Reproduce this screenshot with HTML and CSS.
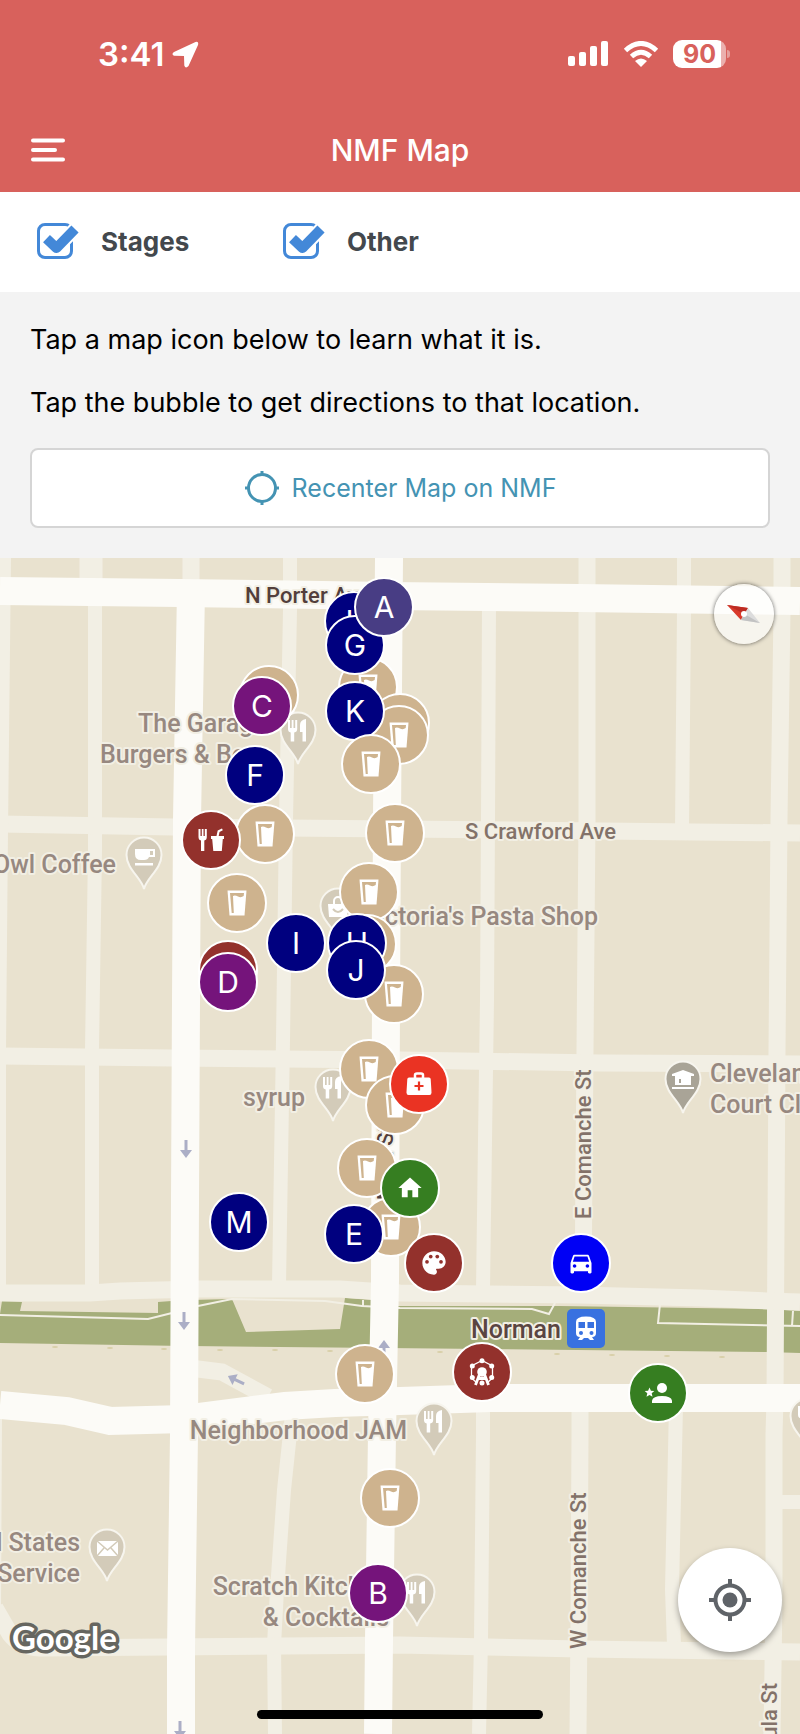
FILE: index.html
```
<!DOCTYPE html>
<html lang="en">
	<head>
		<meta charset="utf-8" />
		<meta name="viewport" content="width=device-width, initial-scale=1" />
		<title>NMF Map</title>
		<link rel="stylesheet" href="styles.css">
	</head>
	<body>
		<header class="header">
			<div class="status">
				<div class="clock">
					<span>3:41</span>
					<svg width="27" height="27" viewBox="0 0 27 27"><path d="M23.500 1L2 11Q-1 13 2 14.700L12 15L12.300 24.500Q13.500 28 16.500 25L26 4Q27 0 23.500 1z" fill="#fff"/></svg>
				</div>
				<div class="indicators">
					<svg width="41" height="26" viewBox="0 0 41 26" fill="#fff">
						<rect x="0" y="15" width="7" height="10" rx="2"/>
						<rect x="11" y="11" width="7" height="14" rx="2"/>
						<rect x="22" y="5" width="7" height="20" rx="2"/>
						<rect x="33" y="0" width="7" height="25" rx="2"/>
					</svg>
					<svg width="36" height="26" viewBox="0 0 36 26" fill="none" stroke="#fff" stroke-width="5">
						<path d="M2.500 9.500Q18-4.500 33.500 9.500"/>
						<path d="M8.500 15.500Q18 7 27.500 15.500"/>
						<path d="M12 20Q18 15 24 20L18 26z" fill="#fff" stroke="none"/>
					</svg>
					<div class="battery"><span class="battery-level">90</span></div>
				</div>
			</div>
			<div class="titlebar">
				<button class="menu" aria-label="Menu">
					<svg width="34" height="24" viewBox="0 0 34 24" stroke="#fff" stroke-width="4" stroke-linecap="round"><path d="M2 2.500h30M2 12h22M2 21.500h30"/></svg>
				</button>
				<h1>NMF Map</h1>
			</div>
		</header>

		<div class="filters">
			<label class="filter">
				<span class="box">
					<input type="checkbox" checked />
					<svg viewBox="0 0 44 36" width="44" height="36"><path class="tick-edge" d="M9.500 15.500l10 9.500L38 6"/><path class="tick" d="M9.500 15.500l10 9.500L38 6"/></svg>
				</span>
				Stages
			</label>
			<label class="filter">
				<span class="box">
					<input type="checkbox" checked />
					<svg viewBox="0 0 44 36" width="44" height="36"><path class="tick-edge" d="M9.500 15.500l10 9.500L38 6"/><path class="tick" d="M9.500 15.500l10 9.500L38 6"/></svg>
				</span>
				Other
			</label>
		</div>

		<section class="help">
			<p>Tap a map icon below to learn what it is.</p>
			<p>Tap the bubble to get directions to that location.</p>
			<button class="recenter">
				<svg width="36" height="36" viewBox="0 0 36 36" fill="none" stroke="#4493b3" stroke-width="3"><circle cx="18" cy="18" r="13.500"/><path d="M18 1v5M18 30v5M1 18h5M30 18h5"/></svg>
				Recenter Map on NMF
			</button>
		</section>

		<main class="map" id="map">
			<svg class="tiles" viewBox="0 558 800 1176">
				<defs>
					<path id="drop" d="M0 34C-2.500 23-17.500 14-17.500 0A17.500 17.500 0 0 1 17.500 0C17.500 14 2.500 23 0 34z" stroke="#f7f5ee" stroke-width="2"/>
					<g id="cutlery" fill="#fff">
						<path d="M-10-10h2v8h1.700v-8h1.800v8h1.700v-8h2v9q0 3-3 3.500v9h-3.500v-9q-2.700-.5-2.700-3.500z"/>
						<path d="M2-5q0-5 6-6v22.500H4.500V2H2z"/>
					</g>
					<path id="arrow" d="M-1.500-9h3V1H6L0 9-6 1h4.500z" fill="#abaec6"/>
				</defs>

				<rect y="558" width="800" height="1176" fill="#e9e2cf"/>

				<!-- rail corridor -->
				<g fill="#a5ae7a">
					<path d="M2 1301L22 1302 20 1311 158 1313 158 1302 185 1300V1346L0 1343V1314z"/>
					<path d="M190 1300L232 1299 246 1332 340 1329 345 1298 385 1301V1348L190 1346z"/>
					<path d="M385 1306L560 1306 767 1309 800 1311V1353L767 1352 385 1348z"/>
				</g>
				<g class="path-line">
					<path d="M0 1315L148 1319 172 1313M198 1306L232 1299 325 1301 362 1306 400 1308 532 1309 549 1314 555 1303"/>
					<path d="M363 1300v6M660 1304L658 1323 800 1326M793 1311L792 1326"/>
				</g>
				<g fill="#d8cfa8">
					<ellipse cx="55" cy="1347" rx="3" ry="1"/><ellipse cx="110" cy="1348" rx="3" ry="1"/><ellipse cx="164" cy="1349" rx="3" ry="1"/>
					<ellipse cx="220" cy="1350" rx="3" ry="1"/><ellipse cx="275" cy="1350" rx="3" ry="1"/><ellipse cx="330" cy="1351" rx="3" ry="1"/>
					<ellipse cx="440" cy="1352" rx="3" ry="1"/><ellipse cx="557" cy="1354" rx="3" ry="1"/><ellipse cx="612" cy="1355" rx="3" ry="1"/>
					<ellipse cx="667" cy="1356" rx="3" ry="1"/><ellipse cx="722" cy="1357" rx="3" ry="1"/>
				</g>

				<!-- side streets -->
				<g class="minor w14">
					<path d="M95 600L95 850 92 1050 92 1290"/>
					<path d="M290 558L290 610 286 820 283 1040 279 1285"/>
					<path d="M293 1405L284 1490 277 1590 274 1645 275 1734"/>
					<path d="M489 605L488 820 487 1000 485 1140 483 1290"/>
					<path d="M483 1405L483 1434 481 1640 479 1734"/>
					<path d="M684 558L684 610 682 830"/>
					<path d="M676 1405L672 1590 674 1645"/>
					<path d="M775 1502H800"/>
				</g>
				<g class="minor w17">
					<path d="M91 558V582" stroke-width="23"/>
					<path d="M191 558V582"/>
					<path d="M587 558L587 820 585 1050 583 1295"/>
					<path d="M580 1405L580 1434 579 1620 578 1734"/>
					<path d="M782 558L782 610 779 820 777 1050 775 1400 774 1434 774 1600 772 1734"/>
					<path d="M0 824L173 827 400 829 800 833"/>
					<path d="M0 1056L172 1058 400 1060 600 1063 800 1064"/>
					<path d="M0 1293L90 1293 120 1291 200 1289 340 1289 400 1293 580 1295 700 1298 767 1301 800 1302"/>
					<path d="M190 1368L222 1372 268 1397"/>
					<path d="M-5 1608L10 1634Q20 1647 40 1648L168 1647 400 1645 580 1649 800 1652"/>
				</g>
				<path class="minor-fill" d="M0 558H11L8 830 6 1050V1290H0zM0 1415H2L1 1610H0z"/>

				<!-- main streets -->
				<g class="major">
					<path d="M0 591L180 593 390 596 578 598 800 601"/>
					<path d="M0 1405L67 1411 110 1421 184 1419 285 1406 335 1403 400 1401 490 1398 800 1398"/>
					<path d="M191 590L187 820 186 1000 185 1200 184 1434 181 1650 181 1734"/>
					<path d="M389 558L387 820 386 1000 385 1280 382 1434 379 1640 378 1734"/>
				</g>

				<use href="#arrow" x="186" y="1149"/>
				<use href="#arrow" x="184" y="1321"/>
				<use href="#arrow" x="180" y="1730"/>
				<use href="#arrow" transform="translate(384 1349) rotate(180)"/>
				<use href="#arrow" transform="translate(236 1380) rotate(116)"/>

				<!-- places -->
				<g fill="#d3cbb9">
					<g transform="translate(298 730)"><use href="#drop"/><use href="#cutlery"/></g>
					<g transform="translate(333 1087)"><use href="#drop"/><use href="#cutlery"/></g>
					<g transform="translate(434 1421)"><use href="#drop"/><use href="#cutlery"/></g>
					<g transform="translate(417 1592)"><use href="#drop"/><use href="#cutlery"/></g>
					<g transform="translate(808 1416)"><use href="#drop"/><use href="#cutlery"/></g>
					<g transform="translate(144 855)">
						<use href="#drop"/>
						<path d="M-9-6H11V2H5Q4 5 0 5H-3Q-9 5-9-1zM6-4V0H9V-4zM-9 8H9V10.500H-9z" fill="#fff" fill-rule="evenodd"/>
					</g>
					<g transform="translate(338 906)">
						<use href="#drop"/>
						<path d="M-10-2H10L9 11H-9z" fill="#fff"/>
						<path d="M-4-2V-5A4 4 0 0 1 4-5V-2" fill="none" stroke="#fff" stroke-width="2"/>
						<path d="M-5 3Q0 9 5 3" fill="none" stroke="#d3cbb9" stroke-width="2"/>
					</g>
					<g transform="translate(107 1547)">
						<use href="#drop"/>
						<rect x="-10" y="-6" width="21" height="15" fill="#fff"/>
						<path d="M-10-6L.5 3 11-6M-10 9L-3 1M11 9L4 1" fill="none" stroke="#d3cbb9" stroke-width="1.500"/>
					</g>
				</g>
				<g transform="translate(683 1079)" fill="#a9a497">
					<use href="#drop"/>
					<path d="M-11-3V-5L0-9 11-5V-3H8V6H-8V-3zM-4-2V4H-2V0H-4M4-2V4H2V0H4M-11 8H11V10H-11z" fill="#fff"/>
				</g>

				<g class="poi">
					<text x="138" y="732">The Garage</text>
					<text x="100" y="763">Burgers &amp; Beer</text>
					<text x="116" y="873" text-anchor="end">Owl Coffee</text>
					<text x="598" y="925" text-anchor="end">Victoria's Pasta Shop</text>
					<text x="305" y="1106" text-anchor="end">syrup</text>
					<text x="710" y="1082">Clevelan</text>
					<text x="710" y="1113">Court Cl</text>
					<text x="407" y="1439" text-anchor="end">Neighborhood JAM</text>
					<text x="80" y="1551" text-anchor="end">d States</text>
					<text x="80" y="1582" text-anchor="end">Service</text>
					<text x="389" y="1595" text-anchor="end">Scratch Kitchen</text>
					<text x="389" y="1626" text-anchor="end">&amp; Cocktails</text>
				</g>
				<g class="street">
					<text x="465" y="839">S Crawford Ave</text>
					<text transform="translate(591 1219) rotate(-90)">E Comanche St</text>
					<text transform="translate(586 1649) rotate(-90)">W Comanche St</text>
					<text transform="translate(777 1683) rotate(-90)" text-anchor="end">Eufaula St</text>
					<text class="dark" x="245" y="603">N Porter Ave</text>
					<text class="dark" transform="translate(393 1218) rotate(-90)">E Main St</text>
				</g>
				<text class="station" x="471" y="1338">Norman</text>
				<g transform="translate(567 1309)">
					<rect width="38" height="39" rx="5" fill="#3871e0"/>
					<path d="M9 13Q9 7.500 19 7.500T29 13V24Q29 28 25 28L27 31H23L21 29H17L15 31H11L13 28Q9 28 9 24z" fill="#fff"/>
					<path d="M11.500 13h6.500v6h-6.500zM20.500 13h6.500v6h-6.500z" fill="#3871e0"/>
					<circle cx="14" cy="24" r="2" fill="#3871e0"/><circle cx="24.500" cy="24" r="2" fill="#3871e0"/>
				</g>
				<text class="google" x="12" y="1650">Google</text>
			</svg>

			<button class="compass" aria-label="Compass">
				<svg width="60" height="60" viewBox="0 0 60 60">
					<path d="M13 21L34 24 27 36z" fill="#d93a2b"/>
					<path d="M13 21L34 24 30.500 30z" fill="#bd2c22"/>
					<path d="M34 24L46 39 27 36z" fill="#dcdcdc"/>
					<path d="M30.500 30L46 39 27 36z" fill="#c2c2c2"/>
					<circle cx="30" cy="30" r="3" fill="#fff"/>
				</svg>
			</button>
			<button class="locate" aria-label="My location">
				<svg width="42" height="42" viewBox="0 0 42 42" fill="none" stroke="#5f6368" stroke-width="4"><circle cx="21" cy="21" r="14.500"/><circle cx="21" cy="21" r="7.500" fill="#5f6368" stroke="none"/><path d="M21 0v6M21 36v6M0 21h6M36 21h6"/></svg>
			</button>
			<div class="home-bar"></div>
		</main>

		<!-- marker icons -->
		<svg class="sprite">
			<symbol id="drink" viewBox="0 0 28 28">
				<path d="M4.500 1.500H23.500L21.500 26.500H6.500z" fill="#fff"/>
				<path d="M7 4H21L20.700 7Q18 9 15 7.500T10 7L10.800 24H8.700z" fill="#ceb38e"/>
			</symbol>
			<symbol id="food" viewBox="0 0 28 28">
				<path d="M1.500 3h2v7h1.300V3h1.700v7h1.300V3h2v8q0 3-2.500 3.500V25H4V14.500Q1.500 14 1.500 11z" fill="#fff"/>
				<path d="M14 10h5.500l1.200-5.500L25 2.500l.8 1.800-3.300 1.600-.8 4.100H27v3h-1.200L24.800 25h-8.500L15.200 13H14z" fill="#fff"/>
			</symbol>
			<symbol id="medical" viewBox="0 0 28 28">
				<path d="M10 8V5Q10 3.500 12 3.500H16Q18 3.500 18 5V8" fill="none" stroke="#fff" stroke-width="2.500"/>
				<path d="M4 7.500H24Q25.500 7.500 25.700 9L26.500 22.500Q26.500 25 24.500 25H3.500Q1.500 25 1.500 22.500L2.300 9Q2.500 7.500 4 7.500z" fill="#fff"/>
				<path d="M14 11.500v9M9.500 16h9" stroke="#ea3323" stroke-width="2.200"/>
			</symbol>
			<symbol id="home" viewBox="0 0 24 24"><path d="M10 20v-6h4v6h5v-8h3L12 3 2 12h3v8z" fill="#fff"/></symbol>
			<symbol id="art" viewBox="0 0 24 24">
				<path d="M12 2C6.490 2 2 6.490 2 12s4.490 10 10 10c1.380 0 2.500-1.120 2.500-2.500 0-.61-.23-1.200-.64-1.670-.08-.1-.13-.21-.13-.33 0-.28.22-.5.5-.5H16c3.310 0 6-2.690 6-6 0-4.960-4.490-9-10-9z" fill="#fff"/>
				<g fill="#93312c"><circle cx="6" cy="11" r="1.600"/><circle cx="9.200" cy="6.500" r="1.600"/><circle cx="14.800" cy="6.500" r="1.600"/><circle cx="18" cy="11" r="1.600"/></g>
			</symbol>
			<symbol id="car" viewBox="0 0 24 24"><path d="M18.920 6.010C18.720 5.420 18.160 5 17.500 5h-11c-.66 0-1.210.42-1.420 1.010L3 12v8c0 .55.45 1 1 1h1c.55 0 1-.45 1-1v-1h12v1c0 .55.45 1 1 1h1c.55 0 1-.45 1-1v-8l-2.080-5.990zM6.500 16c-.83 0-1.500-.67-1.500-1.500S5.670 13 6.500 13s1.500.67 1.500 1.500S7.330 16 6.500 16zm11 0c-.83 0-1.500-.67-1.500-1.500s.67-1.500 1.500-1.500 1.500.67 1.500 1.500-.67 1.500-1.500 1.500zM5 11l1.500-4.500h11L19 11H5z" fill="#fff"/></symbol>
			<symbol id="ride" viewBox="0 0 28 28">
				<path d="M14 2.500L24.500 8V20L19 25M9 25L3.500 20V8L14 2.500" fill="none" stroke="#fff" stroke-width="1.300"/>
				<g fill="#fff"><circle cx="14" cy="2.800" r="2.500"/><circle cx="23.700" cy="8" r="2.500"/><circle cx="23.700" cy="19.500" r="2.500"/><circle cx="4.300" cy="8" r="2.500"/><circle cx="4.300" cy="19.500" r="2.500"/><circle cx="14" cy="25" r="2.500"/><circle cx="14" cy="14" r="4.800"/></g>
				<path d="M12 15L7.500 27M16 15L20.500 27M10 20.500h8" stroke="#fff" stroke-width="2.800"/>
			</symbol>
			<symbol id="guest" viewBox="0 0 28 28">
				<circle cx="18" cy="9" r="5" fill="#fff"/>
				<path d="M8 24V21.500Q9 17 18 17T28 21.500V24z" fill="#fff"/>
				<path d="M5.500 8.500L6.900 11.700 10.300 12 7.700 14.300 8.500 17.700 5.500 15.900 2.500 17.700 3.300 14.300.7 12 4.100 11.700z" fill="#fff"/>
			</symbol>
		</svg>
		<script src="script.js"></script>
	</body>
</html>
```

FILE: styles.css
```
* {
	box-sizing: border-box;
}
body {
	margin: 0;
	font-family: Inter, "Liberation Sans", sans-serif;
	background: #f3f3f3;
	color: #000;
}
button {
	padding: 0;
	border: none;
	font-family: inherit;
	cursor: pointer;
}
svg {
	display: block;
}

/* header */
.header {
	height: 192px;
	background: #d8615c;
	color: #fff;
}
.status {
	display: flex;
	justify-content: space-between;
	align-items: center;
	height: 108px;
	padding: 0 67px 0 98px;
}
.clock {
	display: flex;
	align-items: center;
	gap: 8px;
	font-size: 33px;
	font-weight: 600;
}
.indicators {
	display: flex;
	align-items: center;
	gap: 14px;
}
.battery {
	position: relative;
	width: 53px;
	height: 28px;
	border-radius: 9px;
	background: linear-gradient(to right, #fff 48px, #ebb0ae 48px);
	margin-right: 7px;
	text-align: center;
}
.battery::after {
	content: "";
	position: absolute;
	left: 54px;
	top: 10px;
	width: 3px;
	height: 8px;
	border-radius: 0 3px 3px 0;
	background: #e59f9c;
}
.battery-level {
	color: #d8615c;
	font-size: 25px;
	line-height: 28px;
	font-weight: 700;
}
.titlebar {
	display: grid;
	grid-template-columns: 34px 1fr 34px;
	align-items: center;
	height: 84px;
	padding: 0 31px;
}
.menu {
	background: none;
}
h1 {
	margin: 0;
	text-align: center;
	font-size: 30px;
	line-height: 84px;
	font-weight: 500;
}

/* filters */
.filters {
	display: flex;
	align-items: center;
	height: 100px;
	padding: 0 0 2px 37px;
	background: #fff;
}
.filter {
	display: flex;
	align-items: center;
	gap: 20px;
	width: 246px;
	font-size: 26px;
	font-weight: 700;
	color: #43484d;
}
.box {
	display: grid;
	width: 44px;
	height: 36px;
}
.box input,
.box svg {
	grid-area: 1 / 1;
}
.box input {
	-webkit-appearance: none;
	appearance: none;
	width: 36px;
	height: 36px;
	margin: 0;
	border: 3px solid #4388d8;
	border-radius: 8px;
}
.tick,
.tick-edge {
	fill: none;
	stroke: #4388d8;
	stroke-width: 10;
	stroke-linejoin: round;
}
.tick-edge {
	stroke: #fff;
	stroke-width: 14;
}
.box input:not(:checked) + svg {
	visibility: hidden;
}

/* help text */
.help {
	padding: 16px 30px 30px;
}
.help p {
	margin: 0;
	font-size: 27px;
	line-height: 63px;
}
.recenter {
	display: flex;
	justify-content: center;
	align-items: center;
	gap: 12px;
	width: 100%;
	height: 80px;
	margin-top: 14px;
	border: 2px solid #d5d5d5;
	border-radius: 8px;
	background: #fff;
	color: #4493b3;
	font-size: 25px;
}

/* map */
.map {
	position: relative;
	overflow: hidden;
}
.tiles {
	width: 100%;
	height: auto;
}
.path-line {
	fill: none;
	stroke: #f2efe4;
	stroke-width: 2;
}
.minor {
	fill: none;
	stroke: #f2efe4;
}
.w14 {
	stroke-width: 14;
}
.w17 {
	stroke-width: 17;
}
.minor-fill {
	fill: #f2efe4;
}
.major {
	fill: none;
	stroke: #fcfbf7;
	stroke-width: 28;
}
.tiles text {
	font-family: Roboto, "Liberation Sans", sans-serif;
	stroke: #f2efe4;
	stroke-width: 4;
	stroke-linejoin: round;
	paint-order: stroke;
}
.poi text {
	font-size: 25px;
	font-weight: 500;
	fill: #978880;
}
.street text {
	font-size: 22px;
	font-weight: 500;
	fill: #837269;
}
.tiles .street .dark {
	fill: #523e3b;
}
.tiles .station {
	font-size: 25px;
	font-weight: 500;
	fill: #5a4542;
}
.tiles .google {
	font-family: Lato, sans-serif;
	font-size: 33px;
	font-weight: 700;
	fill: #fff;
	stroke: #666660;
	stroke-width: 7;
}

.pin {
	position: absolute;
	display: grid;
	place-items: center;
	width: 60px;
	height: 60px;
	margin: -30px 0 0 -30px;
	border: 2px solid #fff;
	border-radius: 50%;
	color: #fff;
	font-size: 30px;
	line-height: 30px;
}
.pin.tan {
	background: #ceb38e;
}
.pin.navy {
	background: #00007f;
}
.pin.slate {
	background: #483d84;
}
.pin.purple {
	background: #75147b;
}
.pin.brown {
	background: #93312c;
}
.pin.red {
	background: #ea3323;
}
.pin.green {
	background: #367e21;
}
.pin.blue {
	background: #0000f5;
}

.compass,
.locate {
	position: absolute;
	display: grid;
	place-items: center;
	border-radius: 50%;
}
.compass {
	top: 26px;
	right: 26px;
	width: 60px;
	height: 60px;
	background: rgba(255, 255, 255, 0.65);
	box-shadow: 0 0 4px rgba(0, 0, 0, 0.6);
}
.locate {
	right: 18px;
	bottom: 82px;
	width: 104px;
	height: 104px;
	background: #fff;
	box-shadow: 0 3px 6px rgba(0, 0, 0, 0.35);
}
.home-bar {
	position: absolute;
	left: 50%;
	bottom: 15px;
	width: 286px;
	height: 9px;
	margin-left: -143px;
	border-radius: 5px;
	background: #000;
}
.sprite {
	display: none;
}
```

FILE: script.js
```
// x, y are in the units of the map drawing
var TOP = 558;
var WIDTH = 800;
var HEIGHT = 1176;

var pins = [
	{ x: 269, y: 695, color: "tan" },
	{ x: 262, y: 706, color: "purple", letter: "C" },
	{ x: 368, y: 687, color: "tan", icon: "drink" },
	{ x: 354, y: 621, color: "navy", letter: "L" },
	{ x: 355, y: 645, color: "navy", letter: "G" },
	{ x: 384, y: 607, color: "slate", letter: "A" },
	{ x: 400, y: 723, color: "tan" },
	{ x: 399, y: 735, color: "tan", icon: "drink" },
	{ x: 355, y: 711, color: "navy", letter: "K" },
	{ x: 371, y: 764, color: "tan", icon: "drink" },
	{ x: 255, y: 775, color: "navy", letter: "F" },
	{ x: 265, y: 834, color: "tan", icon: "drink" },
	{ x: 211, y: 840, color: "brown", icon: "food" },
	{ x: 395, y: 833, color: "tan", icon: "drink" },
	{ x: 237, y: 903, color: "tan", icon: "drink" },
	{ x: 369, y: 892, color: "tan", icon: "drink" },
	{ x: 367, y: 944, color: "tan" },
	{ x: 394, y: 994, color: "tan", icon: "drink" },
	{ x: 296, y: 943, color: "navy", letter: "I" },
	{ x: 357, y: 943, color: "navy", letter: "H" },
	{ x: 356, y: 970, color: "navy", letter: "J" },
	{ x: 228, y: 970, color: "brown" },
	{ x: 228, y: 982, color: "purple", letter: "D" },
	{ x: 369, y: 1069, color: "tan", icon: "drink" },
	{ x: 395, y: 1105, color: "tan", icon: "drink" },
	{ x: 419, y: 1084, color: "red", icon: "medical" },
	{ x: 367, y: 1168, color: "tan", icon: "drink" },
	{ x: 391, y: 1227, color: "tan", icon: "drink" },
	{ x: 410, y: 1188, color: "green", icon: "home" },
	{ x: 239, y: 1222, color: "navy", letter: "M" },
	{ x: 354, y: 1234, color: "navy", letter: "E" },
	{ x: 434, y: 1263, color: "brown", icon: "art" },
	{ x: 581, y: 1263, color: "blue", icon: "car" },
	{ x: 482, y: 1372, color: "brown", icon: "ride" },
	{ x: 658, y: 1393, color: "green", icon: "guest" },
	{ x: 365, y: 1374, color: "tan", icon: "drink" },
	{ x: 390, y: 1498, color: "tan", icon: "drink" },
	{ x: 378, y: 1593, color: "purple", letter: "B" }
];

var map = document.getElementById("map");
var compass = document.querySelector(".compass");

pins.forEach(function (pin) {
	var button = document.createElement("button");
	button.className = "pin " + pin.color;
	button.style.left = (pin.x / WIDTH) * 100 + "%";
	button.style.top = ((pin.y - TOP) / HEIGHT) * 100 + "%";
	if (pin.letter) {
		button.textContent = pin.letter;
	} else if (pin.icon) {
		button.innerHTML = '<svg width="28" height="28"><use href="#' + pin.icon + '"/></svg>';
	}
	map.insertBefore(button, compass);
});
```
